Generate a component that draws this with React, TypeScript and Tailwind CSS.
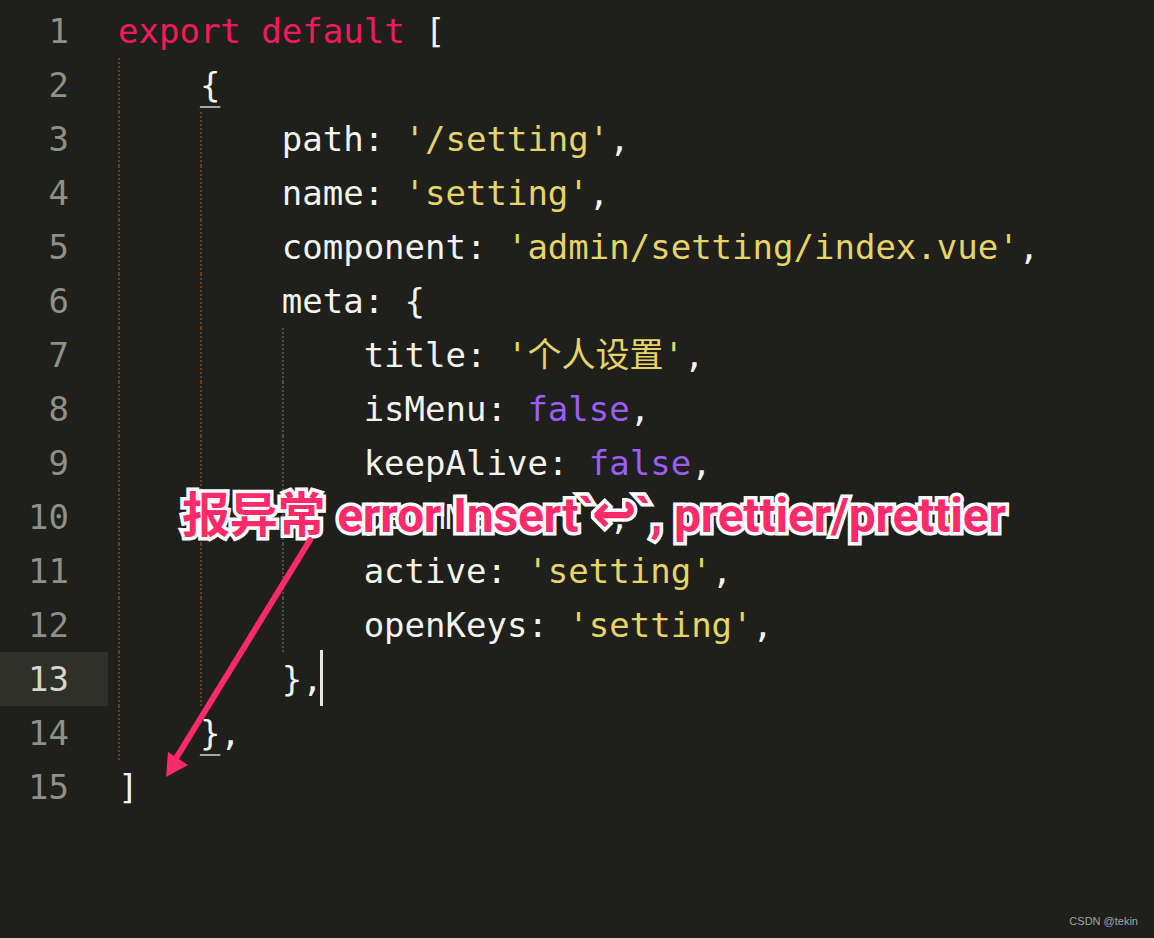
import React from "react"

type Tok = { t: string; c?: "kw" | "str" | "bool" | "ul" }
type Line = { indent: number; toks: Tok[]; cursor?: boolean }

const lines: Line[] = [
  { indent: 0, toks: [{ t: "export", c: "kw" }, { t: " " }, { t: "default", c: "kw" }, { t: " [" }] },
  { indent: 1, toks: [{ t: "{", c: "ul" }] },
  { indent: 2, toks: [{ t: "path: " }, { t: "'/setting'", c: "str" }, { t: "," }] },
  { indent: 2, toks: [{ t: "name: " }, { t: "'setting'", c: "str" }, { t: "," }] },
  { indent: 2, toks: [{ t: "component: " }, { t: "'admin/setting/index.vue'", c: "str" }, { t: "," }] },
  { indent: 2, toks: [{ t: "meta: {" }] },
  { indent: 3, toks: [{ t: "title: " }, { t: "'个人设置'", c: "str" }, { t: "," }] },
  { indent: 3, toks: [{ t: "isMenu: " }, { t: "false", c: "bool" }, { t: "," }] },
  { indent: 3, toks: [{ t: "keepAlive: " }, { t: "false", c: "bool" }, { t: "," }] },
  { indent: 3, toks: [{ t: "permMenu: " }, { t: "''", c: "str" }, { t: "," }] },
  { indent: 3, toks: [{ t: "active: " }, { t: "'setting'", c: "str" }, { t: "," }] },
  { indent: 3, toks: [{ t: "openKeys: " }, { t: "'setting'", c: "str" }, { t: "," }] },
  { indent: 2, toks: [{ t: "}," }], cursor: true },
  { indent: 1, toks: [{ t: "}", c: "ul" }, { t: "," }] },
  { indent: 0, toks: [{ t: "]" }] },
]

const tokClass = {
  kw: "text-[#f5195c]",
  str: "text-[#e6d468]",
  bool: "text-[#9d5df5]",
  ul: "underline decoration-2 underline-offset-[9px] decoration-[#a8a8a2]",
}

// outer guides are brown, the innermost one grey
const guideClass = [
  "border-[#6e3f14]",
  "border-[#6e3f14]",
  "border-[#4e4e48]",
]

export default function App() {
  return (
    <div className="relative h-[938px] w-full overflow-hidden bg-[#1f1f1b] font-['DejaVu_Sans_Mono','Noto_Sans_CJK_SC',monospace] text-[34px] text-[#f4f4ee]">
      <div className="flex flex-col pt-[4px]">
        {lines.map((line, i) => {
          const active = i === 12
          return (
            <div key={i} className="flex h-[54px]">
              <div
                className={
                  active
                    ? "w-[108px] shrink-0 bg-[#30302a] pr-[39px] text-right leading-[54px] text-[#d6d6d0]"
                    : "w-[108px] shrink-0 pr-[39px] text-right leading-[54px] text-[#8f908a]"
                }
              >
                {i + 1}
              </div>
              <div className="flex pl-[10px]">
                {Array.from({ length: line.indent }).map((_, k) => (
                  <span
                    key={k}
                    className={"w-[4ch] shrink-0 border-l-2 border-dotted " + guideClass[k]}
                  />
                ))}
                <span className="whitespace-pre leading-[54px]">
                  {line.toks.map((tok, k) => (
                    <span key={k} className={tok.c ? tokClass[tok.c] : undefined}>
                      {tok.t}
                    </span>
                  ))}
                </span>
                {line.cursor && <span className="-ml-[3px] -mt-[2px] h-[56px] w-[3px] bg-[#e6e6e0]" />}
              </div>
            </div>
          )
        })}
      </div>

      {/* annotation */}
      <div className="pointer-events-none absolute left-[182px] top-[487px] whitespace-pre font-['Roboto','Noto_Sans_CJK_SC',sans-serif] text-[48px] font-bold leading-none tracking-[-0.2px] text-[#ff2a6a] [-webkit-text-stroke:7px_#ffffff] [paint-order:stroke_fill]">
        报异常 error Insert`<span className="-mx-[2px] font-['DejaVu_Sans',sans-serif] text-[54px]">↩</span>`, prettier/prettier
      </div>

      <svg className="pointer-events-none absolute left-0 top-0" width="1154" height="938">
        <line x1="310" y1="540" x2="175" y2="760" stroke="#ff2a6a" strokeWidth="6" strokeLinecap="round" />
        <polygon points="166,777 168,752 188,765" fill="#ff2a6a" />
      </svg>

      <div className="absolute bottom-[9px] right-[16px] font-['Liberation_Sans',sans-serif] text-[11px] text-[#a6a6a2]">
        CSDN @tekin
      </div>
    </div>
  )
}
